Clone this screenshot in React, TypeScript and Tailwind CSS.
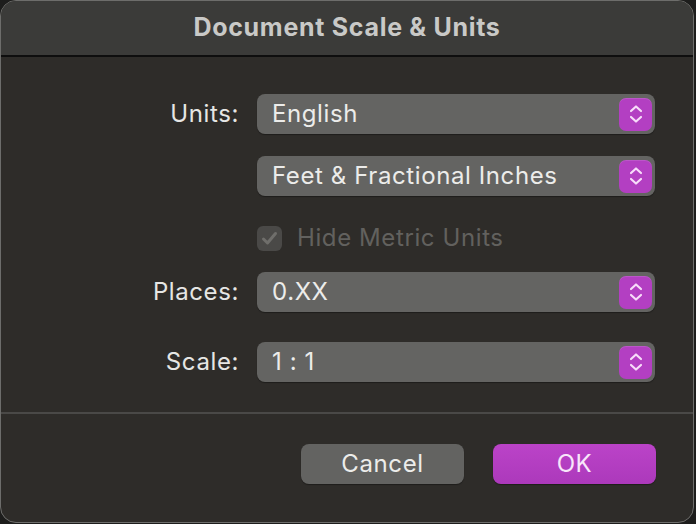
import React from 'react';

const font = { fontFamily: 'Inter, "Liberation Sans", sans-serif' };

function Stepper() {
  return (
    <div className="flex h-[33px] w-[33px] items-center justify-center rounded-[7px] bg-[#b33fc2] shadow-[inset_0_1px_0_rgba(255,255,255,0.12)]">
      <svg width="16" height="22" viewBox="0 0 16 22" fill="none" stroke="#f7dcf9" strokeWidth="2.2" strokeLinecap="round" strokeLinejoin="round">
        <polyline points="3 8 8 3.5 13 8" />
        <polyline points="3 14 8 18.5 13 14" />
      </svg>
    </div>
  );
}

function Popup({ value }: { value: string }) {
  return (
    <div className="flex h-[40px] w-[398px] items-center justify-between rounded-[8px] bg-[#646462] pl-[15px] pr-[3px] shadow-[0_1px_1px_rgba(0,0,0,0.35)]">
      <span className="text-[24px] tracking-[0.6px] text-[#ececea]">{value}</span>
      <Stepper />
    </div>
  );
}

function Label({ text }: { text: string }) {
  return <div className="flex h-[40px] items-center justify-end text-[24px] tracking-[0.6px] text-[#e6e6e4]">{text}</div>;
}

export default function App() {
  return (
    <div className="h-[524px] w-[696px] bg-[#1d1d1c]" style={font}>
      <div className="flex h-[523px] w-[694px] flex-col overflow-hidden rounded-[16px] border-[1.5px] border-[#6d6d6b] bg-[#2e2c29]">
        <div className="flex h-[56px] shrink-0 items-center justify-center border-b-2 border-[#0e0e0e] bg-[#3b3b39]">
          <span className="text-[25px] font-bold tracking-[0.7px] text-[#c9c9c7]">Document Scale &amp; Units</span>
        </div>

        <div className="grid grid-cols-[238px_398px] gap-x-[18px] pt-[37px]">
          <Label text="Units:" />
          <Popup value="English" />

          <div className="mt-[22px]" />
          <div className="mt-[22px]">
            <Popup value="Feet & Fractional Inches" />
          </div>

          <div className="mt-[29px]" />
          <div className="mt-[29px] flex h-[26px] items-center gap-[15px]">
            <div className="flex h-[25px] w-[25px] items-center justify-center rounded-[6px] bg-[#4a4947]">
              <svg width="17" height="15" viewBox="0 0 17 15" fill="none" stroke="#6f6e6b" strokeWidth="3" strokeLinecap="round" strokeLinejoin="round">
                <polyline points="2.5 8 6.5 12 14.5 2.5" />
              </svg>
            </div>
            <span className="text-[24px] tracking-[0.6px] text-[#62615e]">Hide Metric Units</span>
          </div>

          <div className="mt-[21px]">
            <Label text="Places:" />
          </div>
          <div className="mt-[21px]">
            <Popup value="0.XX" />
          </div>

          <div className="mt-[30px]">
            <Label text="Scale:" />
          </div>
          <div className="mt-[30px]">
            <Popup value="1 : 1" />
          </div>
        </div>

        <div className="mt-[30px] h-[2px] bg-[#4a4947]" />

        <div className="flex justify-end gap-[29px] pr-[37px] pt-[30px]">
          <button className="flex h-[40px] w-[163px] items-center justify-center rounded-[8px] bg-[#636361] text-[24px] tracking-[0.6px] text-[#ececea] shadow-[0_1px_1px_rgba(0,0,0,0.35)]">
            Cancel
          </button>
          <button className="flex h-[40px] w-[163px] items-center justify-center rounded-[8px] bg-gradient-to-b from-[#bb43c8] to-[#ac39bb] text-[24px] tracking-[0.6px] text-[#f8e6fa] shadow-[0_1px_1px_rgba(0,0,0,0.35)]">
            OK
          </button>
        </div>
      </div>
    </div>
  );
}
